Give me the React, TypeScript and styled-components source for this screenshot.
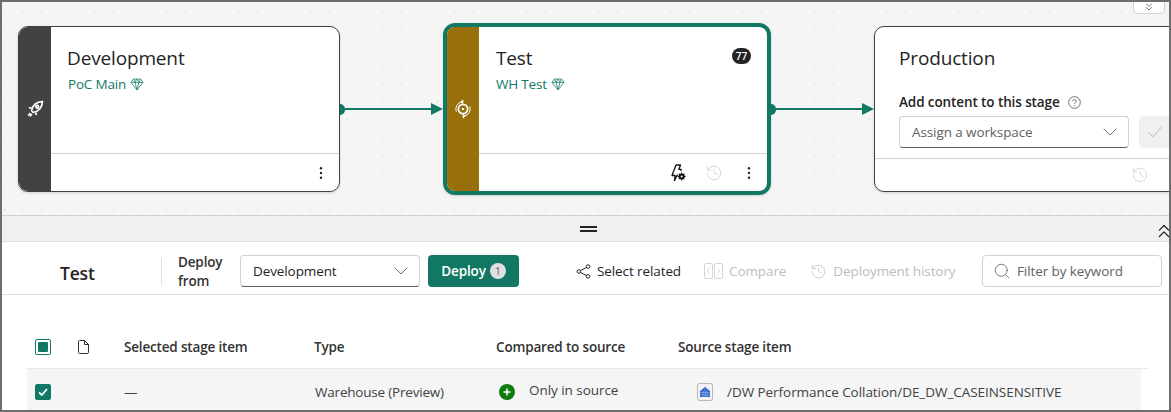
import React from "react";
import styled, { createGlobalStyle } from "styled-components";
import { ChevronDown, ChevronsDown, ChevronsUp, History, Search } from "lucide-react";

const GlobalStyle = createGlobalStyle`
  html, body {
    margin: 0;
    padding: 0;
    background: #fff;
  }
  body {
    font-family: "Open Sans", "Noto Sans", sans-serif;
    color: #242424;
  }
`;

const TEAL = "#117865";

const Frame = styled.div`
  width: 1171px;
  height: 412px;
  box-sizing: border-box;
  border: 2px solid #6e6e6e;
  display: flex;
  flex-direction: column;
  overflow: hidden;
  background: #fff;
`;

const Canvas = styled.div`
  position: relative;
  flex: 0 0 213px;
  box-sizing: border-box;
  padding: 1px 0 0 16px;
  display: flex;
  align-items: center;
  overflow: hidden;
  background-color: #f5f5f5;
  background-image: radial-gradient(circle, #ebebeb 1px, transparent 1.2px);
  background-size: 18px 18px;
  background-position: -6px 1px;
`;

const ZoomButton = styled.div`
  position: absolute;
  top: -8px;
  right: 4px;
  width: 32px;
  height: 20px;
  box-sizing: border-box;
  background: #fff;
  border: 1px solid #d1d1d1;
  border-radius: 4px;
  display: flex;
  align-items: flex-end;
  justify-content: center;
`;

const Card = styled.div<{ $active?: boolean }>`
  flex: 0 0 auto;
  box-sizing: border-box;
  width: ${(p) => (p.$active ? "328px" : "322px")};
  height: ${(p) => (p.$active ? "172px" : "166px")};
  display: flex;
  background: #fff;
  overflow: hidden;
  border: ${(p) => (p.$active ? `4px solid ${TEAL}` : "1px solid #424242")};
  border-radius: ${(p) => (p.$active ? "12px" : "10px")};
  box-shadow: 0 1px 3px rgba(0, 0, 0, 0.14);
`;

const Strip = styled.div<{ $color: string; $width: number }>`
  flex: 0 0 ${(p) => p.$width}px;
  background: ${(p) => p.$color};
  display: flex;
  align-items: center;
  justify-content: center;
`;

const CardMain = styled.div`
  flex: 1;
  min-width: 0;
  display: flex;
  flex-direction: column;
`;

const CardBody = styled.div<{ $left: number; $top: number }>`
  position: relative;
  flex: 1;
  padding: ${(p) => p.$top}px 16px 0 ${(p) => p.$left}px;
`;

const StageTitle = styled.div`
  font-size: 19px;
  line-height: 26px;
  letter-spacing: -0.15px;
  color: #242424;
`;

const WorkspaceLink = styled.div<{ $indent?: number }>`
  margin-top: 3px;
  padding-left: ${(p) => p.$indent ?? 0}px;
  display: flex;
  align-items: center;
  gap: 4px;
  font-size: 13.5px;
  line-height: 20px;
  letter-spacing: -0.2px;
  color: ${TEAL};
`;

const CountBadge = styled.div`
  position: absolute;
  top: 21px;
  right: 16px;
  width: 19px;
  height: 16px;
  border-radius: 8px;
  background: #242424;
  color: #fff;
  font-size: 10px;
  font-weight: 600;
  line-height: 16px;
  text-align: center;
`;

const CardFooter = styled.div<{ $height: number; $right: number }>`
  flex: 0 0 ${(p) => p.$height}px;
  box-sizing: border-box;
  border-top: 1px solid #d1d1d1;
  display: flex;
  align-items: center;
  justify-content: flex-end;
  gap: 18px;
  padding-right: ${(p) => p.$right}px;
`;

const FieldLabel = styled.div`
  margin-top: 22px;
  display: flex;
  align-items: center;
  gap: 8px;
  font-size: 13.5px;
  font-weight: 600;
  line-height: 18px;
  letter-spacing: -0.1px;
`;

const FieldRow = styled.div`
  margin-top: 5px;
  display: flex;
  gap: 10px;
`;

const Select = styled.div<{ $width: number; $pad: number }>`
  flex: 0 0 ${(p) => p.$width}px;
  box-sizing: border-box;
  height: 32px;
  padding: 0 6px 0 ${(p) => p.$pad}px;
  display: flex;
  align-items: center;
  justify-content: space-between;
  background: #fff;
  border: 1px solid #d1d1d1;
  border-bottom-color: #616161;
  border-radius: 4px;
  font-size: 13.5px;
  letter-spacing: -0.1px;
`;

const Placeholder = styled.span`
  color: #616161;
`;

const ConfirmButton = styled.div`
  flex: 0 0 32px;
  height: 32px;
  border-radius: 4px;
  background: #f0f0f0;
  display: flex;
  align-items: center;
  justify-content: center;
`;

const Connector = styled.div`
  flex: 0 0 103px;
  display: flex;
  align-items: center;
`;

const ConnectorDot = styled.div`
  flex: 0 0 5px;
  height: 11px;
  background: ${TEAL};
  border-radius: 0 6px 6px 0;
`;

const ConnectorLine = styled.div`
  flex: 1;
  height: 2px;
  background: ${TEAL};
`;

const ConnectorArrow = styled.div`
  width: 0;
  height: 0;
  border-left: 12px solid ${TEAL};
  border-top: 6px solid transparent;
  border-bottom: 6px solid transparent;
`;

const Splitter = styled.div`
  position: relative;
  flex: 0 0 27px;
  box-sizing: border-box;
  padding-left: 5px;
  background: #f0f0f0;
  border-top: 1px solid #d1d1d1;
  border-bottom: 1px solid #e0e0e0;
  display: flex;
  align-items: center;
  justify-content: center;
`;

const Grip = styled.div`
  width: 17px;
  height: 6px;
  box-sizing: border-box;
  border-top: 2px solid #242424;
  border-bottom: 2px solid #242424;
`;

const CollapseToggle = styled.div`
  position: absolute;
  right: -6px;
  top: 4px;
  display: flex;
`;

const Toolbar = styled.div`
  flex: 0 0 53px;
  box-sizing: border-box;
  padding: 6px 7px 0 58px;
  border-bottom: 1px solid #e0e0e0;
  display: flex;
  align-items: center;
`;

const ToolbarTitle = styled.div`
  flex: 0 0 101px;
  font-size: 17.5px;
  font-weight: 600;
  letter-spacing: -0.2px;
  padding-top: 3px;
`;

const ToolbarDivider = styled.div`
  flex: 0 0 1px;
  height: 27px;
  background: #e0e0e0;
`;

const DeployLabel = styled.div`
  flex: 0 0 62px;
  margin-left: 16px;
  padding-top: 2px;
  box-sizing: border-box;
  font-size: 13.5px;
  font-weight: 600;
  line-height: 19px;
  letter-spacing: -0.15px;
  color: #333;
`;

const DeployButton = styled.div`
  flex: 0 0 91px;
  margin-left: 8px;
  height: 32px;
  box-sizing: border-box;
  border-radius: 4px;
  background: ${TEAL};
  color: #fff;
  font-size: 13.5px;
  font-weight: 600;
  letter-spacing: -0.15px;
  display: flex;
  align-items: center;
  justify-content: center;
  gap: 4px;
`;

const DeployCount = styled.span`
  width: 16px;
  height: 16px;
  border-radius: 50%;
  background: #e0e0e0;
  color: #616161;
  font-size: 10px;
  font-weight: 400;
  line-height: 16px;
  text-align: center;
`;

const Action = styled.div<{ $disabled?: boolean; $left: number; $gap: number }>`
  margin-left: ${(p) => p.$left}px;
  display: flex;
  align-items: center;
  gap: ${(p) => p.$gap}px;
  font-size: 13.5px;
  letter-spacing: -0.1px;
  color: ${(p) => (p.$disabled ? "#bdbdbd" : "#242424")};
  white-space: nowrap;
`;

const SearchBox = styled.div`
  margin-left: auto;
  flex: 0 0 180px;
  height: 32px;
  box-sizing: border-box;
  padding-left: 10px;
  border: 1px solid #d1d1d1;
  border-radius: 4px;
  display: flex;
  align-items: center;
  gap: 6px;
  font-size: 13.5px;
  letter-spacing: -0.1px;
  color: #616161;
`;

const Table = styled.div`
  flex: 1;
  padding: 30px 0 0 25px;
`;

const Row = styled.div<{ $header?: boolean }>`
  display: grid;
  grid-template-columns: 43px 46px 190px 182px 182px 1fr;
  align-items: center;
  box-sizing: border-box;
  padding-left: 8px;
  font-size: 13.5px;
  width: ${(p) => (p.$header ? "1122px" : "1114px")};
  height: ${(p) => (p.$header ? "44px" : "45px")};
  letter-spacing: ${(p) => (p.$header ? "-0.17px" : "-0.05px")};
  font-weight: ${(p) => (p.$header ? 600 : 400)};
  color: ${(p) => (p.$header ? "#333" : "#424242")};
  background: ${(p) => (p.$header ? "#fff" : "#f5f5f5")};
  border-bottom: ${(p) => (p.$header ? "1px solid #e8e8e8" : "none")};
`;

const CheckBox = styled.div<{ $partial?: boolean }>`
  width: 16px;
  height: 16px;
  box-sizing: border-box;
  border-radius: 2px;
  display: flex;
  align-items: center;
  justify-content: center;
  border: 1px solid ${TEAL};
  background: ${(p) => (p.$partial ? "#fff" : TEAL)};
`;

const CheckFill = styled.div`
  width: 10px;
  height: 10px;
  border-radius: 1px;
  background: ${TEAL};
`;

const TypeCell = styled.span`
  padding-left: 1px;
  letter-spacing: -0.2px;
`;

const CompareCell = styled.div`
  display: flex;
  align-items: center;
  gap: 14px;
  padding-left: 3px;
`;

const CompareText = styled.span`
  padding-bottom: 4px;
`;

const SourceCell = styled.div`
  display: flex;
  align-items: center;
  gap: 14px;
  padding-left: 19px;
  white-space: nowrap;
`;

const MoreIcon = () => (
  <svg width="16" height="16" viewBox="0 0 16 16" fill="#242424">
    <circle cx="8" cy="3.2" r="1.2" />
    <circle cx="8" cy="8" r="1.2" />
    <circle cx="8" cy="12.8" r="1.2" />
  </svg>
);

const GemIcon = () => (
  <svg width="14" height="13" viewBox="0 0 14 13" fill="none" stroke="#2f8d7c" strokeWidth="0.9">
    <path d="M3.5 1h7L13 4.4 7 12 1 4.4 3.5 1Z" />
    <path d="M1 4.4h12M5 4.4 7 12l2-7.6M5 4.4 7 1l2 3.4M3.5 1 5 4.4M10.5 1 9 4.4" />
  </svg>
);

const RocketIcon = () => (
  <svg width="18" height="18" viewBox="0 0 16 16" fill="none" stroke="#fff" strokeWidth="1.5">
    <path d="M5 9.6C5.4 5 9.4 1.4 14.6 1.4c0 5.2-3.6 9.2-8.2 9.6L5 9.6Z" />
    <circle cx="10" cy="6" r="1.2" />
    <path d="M4.8 6.6 2.6 7.4M9.4 11.2l-.8 2.2M4 11.6 1.8 13.8M5.2 12.4l-1.8 2.2" />
  </svg>
);

const SyncIcon = () => (
  <svg width="16" height="20" viewBox="0 0 16 20" fill="none" stroke="#fff">
    <circle cx="8" cy="10" r="4.6" strokeWidth="1.8" />
    <path d="M6.9 8.9l2.2 2.2M9.1 8.9l-2.2 2.2" strokeWidth="1" />
    <path d="M1.3 12.6A7.2 7.2 0 0 1 6.6 3M14.7 7.4A7.2 7.2 0 0 1 9.4 17" strokeWidth="1" />
    <path d="M8 .8 8 4.6 5.6 3ZM8 19.2 8 15.4 10.4 17Z" fill="#fff" strokeWidth="0.6" />
  </svg>
);

const PipelineRuleIcon = () => (
  <svg width="17" height="18" viewBox="0 0 17 18" fill="none">
    <path d="M6 1h4.5L8.8 5.4h2.4L10.8 7M7.5 10.5l-3 6 .6-5H2L6 1" stroke="#111" strokeWidth="1.3" strokeLinejoin="round" />
    <circle cx="11.6" cy="12.4" r="3" fill="#111" />
    <path d="M11.6 8.4v8M7.6 12.4h8M8.8 9.6l5.6 5.6M14.4 9.6l-5.6 5.6" stroke="#111" strokeWidth="1.1" />
    <circle cx="11.6" cy="12.4" r="1" fill="#fff" />
  </svg>
);

const HelpIcon = () => (
  <svg width="13" height="13" viewBox="0 0 13 13" fill="none" stroke="#616161">
    <circle cx="6.5" cy="6.5" r="5.8" strokeWidth="0.9" />
    <path d="M4.8 5.2c0-1 .8-1.6 1.7-1.6s1.7.6 1.7 1.5c0 1.3-1.7 1.3-1.7 2.7" strokeWidth="0.9" />
    <circle cx="6.5" cy="9.6" r="0.6" fill="#616161" stroke="none" />
  </svg>
);

const RelatedIcon = () => (
  <svg width="15" height="15" viewBox="0 0 15 15" fill="none" stroke="#242424" strokeWidth="1">
    <circle cx="2.8" cy="7.5" r="1.8" />
    <circle cx="12" cy="2.6" r="1.8" />
    <circle cx="12" cy="12.4" r="1.8" />
    <path d="M4.4 6.6 10.4 3.5M4.4 8.4l6 3.1" />
  </svg>
);

const CompareIcon = () => (
  <svg width="19" height="16" viewBox="0 0 19 16" fill="none" stroke="#d6d6d6" strokeWidth="1">
    <rect x="0.5" y="0.5" width="8" height="15" rx="1.5" />
    <rect x="10.5" y="0.5" width="8" height="15" rx="1.5" />
    <path d="M5.6 5.5 3.4 8l2.2 2.5M13.4 5.5 15.6 8l-2.2 2.5" />
  </svg>
);

const FileIcon = () => (
  <svg width="11" height="14" viewBox="0 0 11 14" fill="none" stroke="#333" strokeWidth="1">
    <path d="M1.5.5h5l4 4v7.8a1.2 1.2 0 0 1-1.2 1.2H1.7a1.2 1.2 0 0 1-1.2-1.2V1.5a1 1 0 0 1 1-1Z" />
    <path d="M6.5.5v4h4" />
  </svg>
);

const CheckMark = ({ color = "#fff", size = 10, width = 1.8 }: { color?: string; size?: number; width?: number }) => (
  <svg width={size} height={size} viewBox="0 0 10 10" fill="none" stroke={color} strokeWidth={width}>
    <path d="M1 5.4 3.8 8 9 2" />
  </svg>
);

const PlusIcon = () => (
  <svg width="16" height="16" viewBox="0 0 16 16">
    <circle cx="8" cy="8" r="8" fill="#107c10" />
    <path d="M8 4.5v7M4.5 8h7" stroke="#fff" strokeWidth="1.5" />
  </svg>
);

const WarehouseIcon = () => (
  <svg width="16" height="18" viewBox="0 0 16 18">
    <rect x="0.5" y="0.5" width="15" height="17" rx="2" fill="#f3f3f3" stroke="#b5b5b5" />
    <path d="M3 14V8l5-4 5 4v6H3Z" fill="#2f66d0" />
    <path d="M3 9.5h10M3 12h10M6 8v6M8 6v8M10 8v6" stroke="#a9c3f0" strokeWidth="0.5" />
  </svg>
);

export default function App() {
  return (
    <>
      <GlobalStyle />
      <Frame>
        <Canvas>
          <ZoomButton>
            <ChevronsDown size={12} color="#424242" strokeWidth={1.4} />
          </ZoomButton>

          <Card>
            <Strip $color="#424242" $width={32}>
              <RocketIcon />
            </Strip>
            <CardMain>
              <CardBody $left={16} $top={18}>
                <StageTitle>Development</StageTitle>
                <WorkspaceLink $indent={1}>
                  PoC Main <GemIcon />
                </WorkspaceLink>
              </CardBody>
              <CardFooter $height={38} $right={10}>
                <MoreIcon />
              </CardFooter>
            </CardMain>
          </Card>

          <Connector>
            <ConnectorDot />
            <ConnectorLine />
            <ConnectorArrow />
          </Connector>

          <Card $active>
            <Strip $color="#986f0b" $width={32}>
              <SyncIcon />
            </Strip>
            <CardMain>
              <CardBody $left={17} $top={18}>
                <StageTitle>Test</StageTitle>
                <WorkspaceLink>
                  WH Test <GemIcon />
                </WorkspaceLink>
                <CountBadge>77</CountBadge>
              </CardBody>
              <CardFooter $height={38} $right={10}>
                <PipelineRuleIcon />
                <History size={18} color="#d1d1d1" strokeWidth={1.1} />
                <MoreIcon />
              </CardFooter>
            </CardMain>
          </Card>

          <Connector>
            <ConnectorDot />
            <ConnectorLine />
            <ConnectorArrow />
          </Connector>

          <Card>
            <CardMain>
              <CardBody $left={24} $top={18}>
                <StageTitle>Production</StageTitle>
                <FieldLabel>
                  Add content to this stage <HelpIcon />
                </FieldLabel>
                <FieldRow>
                  <Select $width={230} $pad={12}>
                    <Placeholder>Assign a workspace</Placeholder>
                    <ChevronDown size={24} color="#616161" strokeWidth={0.9} />
                  </Select>
                  <ConfirmButton>
                    <CheckMark color="#c8c8c8" size={16} width={0.7} />
                  </ConfirmButton>
                </FieldRow>
              </CardBody>
              <CardFooter $height={33} $right={46}>
                <History size={18} color="#d1d1d1" strokeWidth={1.1} />
              </CardFooter>
            </CardMain>
          </Card>
        </Canvas>

        <Splitter>
          <Grip />
          <CollapseToggle>
            <ChevronsUp size={22} color="#242424" strokeWidth={1.4} />
          </CollapseToggle>
        </Splitter>

        <Toolbar>
          <ToolbarTitle>Test</ToolbarTitle>
          <ToolbarDivider />
          <DeployLabel>
            Deploy
            <br />
            from
          </DeployLabel>
          <Select $width={180} $pad={12}>
            Development
            <ChevronDown size={24} color="#616161" strokeWidth={0.9} />
          </Select>
          <DeployButton>
            Deploy <DeployCount>1</DeployCount>
          </DeployButton>
          <Action $left={57} $gap={6}>
            <RelatedIcon />
            Select related
          </Action>
          <Action $left={23} $gap={6} $disabled>
            <CompareIcon />
            Compare
          </Action>
          <Action $left={24} $gap={6} $disabled>
            <History size={17} color="#c8c8c8" strokeWidth={1.2} />
            Deployment history
          </Action>
          <SearchBox>
            <Search size={18} color="#616161" strokeWidth={1.1} />
            Filter by keyword
          </SearchBox>
        </Toolbar>

        <Table>
          <Row $header>
            <CheckBox $partial>
              <CheckFill />
            </CheckBox>
            <FileIcon />
            <span>Selected stage item</span>
            <span>Type</span>
            <span>Compared to source</span>
            <span>Source stage item</span>
          </Row>
          <Row>
            <CheckBox>
              <CheckMark />
            </CheckBox>
            <span />
            <span>—</span>
            <TypeCell>Warehouse (Preview)</TypeCell>
            <CompareCell>
              <PlusIcon />
              <CompareText>Only in source</CompareText>
            </CompareCell>
            <SourceCell>
              <WarehouseIcon />
              /DW Performance Collation/DE_DW_CASEINSENSITIVE
            </SourceCell>
          </Row>
        </Table>
      </Frame>
    </>
  );
}
